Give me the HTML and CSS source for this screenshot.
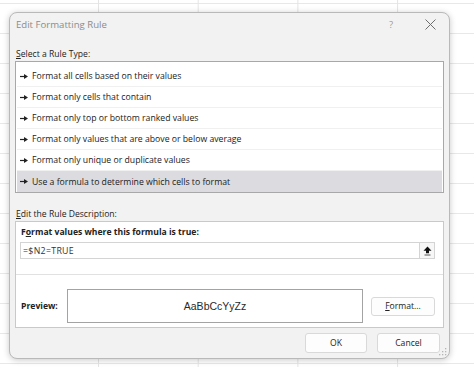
FILE: index.html
```html
<!DOCTYPE html>
<html>
<head>
<meta charset="utf-8">
<link rel="stylesheet" href="styles.css">
</head>
<body>
<div class="dialog">
  <div class="titlebar">
    <span class="title">Edit Formatting Rule</span>
    <span class="help">?</span>
    <svg class="close" width="11" height="11" viewBox="0 0 11 11"><path d="M0.5 0.5L10.5 10.5M10.5 0.5L0.5 10.5" stroke="#6e6e6e" stroke-width="1"/></svg>
  </div>
  <div class="content">
    <div class="label"><u>S</u>elect a Rule Type:</div>
    <ul class="rules">
      <li><svg class="arrow" width="8" height="5" viewBox="0 0 8 5"><path d="M0 2.5H4.5" stroke="#222" stroke-width="1.2"/><path d="M4 0L8 2.5L4 5Z" fill="#222"/></svg>Format all cells based on their values</li>
      <li><svg class="arrow" width="8" height="5" viewBox="0 0 8 5"><path d="M0 2.5H4.5" stroke="#222" stroke-width="1.2"/><path d="M4 0L8 2.5L4 5Z" fill="#222"/></svg>Format only cells that contain</li>
      <li><svg class="arrow" width="8" height="5" viewBox="0 0 8 5"><path d="M0 2.5H4.5" stroke="#222" stroke-width="1.2"/><path d="M4 0L8 2.5L4 5Z" fill="#222"/></svg>Format only top or bottom ranked values</li>
      <li><svg class="arrow" width="8" height="5" viewBox="0 0 8 5"><path d="M0 2.5H4.5" stroke="#222" stroke-width="1.2"/><path d="M4 0L8 2.5L4 5Z" fill="#222"/></svg>Format only values that are above or below average</li>
      <li><svg class="arrow" width="8" height="5" viewBox="0 0 8 5"><path d="M0 2.5H4.5" stroke="#222" stroke-width="1.2"/><path d="M4 0L8 2.5L4 5Z" fill="#222"/></svg>Format only unique or duplicate values</li>
      <li class="selected"><svg class="arrow" width="8" height="5" viewBox="0 0 8 5"><path d="M0 2.5H4.5" stroke="#222" stroke-width="1.2"/><path d="M4 0L8 2.5L4 5Z" fill="#222"/></svg>Use a formula to determine which cells to format</li>
    </ul>
    <div class="label label-desc"><u>E</u>dit the Rule Description:</div>
    <div class="desc">
      <div class="desc-top">
        <div class="bold">F<u>o</u>rmat values where this formula is true:</div>
        <div class="formula">
          <span class="formula-text">=$N2=TRUE</span>
          <span class="collapse"><svg width="9" height="10" viewBox="0 0 9 10"><path d="M4.5 0.5L8.5 4.8H6V7.2H3V4.8H0.5Z" fill="#111"/><path d="M1.5 9H7.5" stroke="#555" stroke-width="1"/></svg></span>
        </div>
      </div>
      <div class="preview-row">
        <span class="bold preview-label">Preview:</span>
        <div class="preview">AaBbCcYyZz</div>
        <span class="btn btn-format"><u>F</u>ormat...</span>
      </div>
    </div>
    <div class="actions">
      <span class="btn btn-ok">OK</span>
      <span class="btn btn-cancel">Cancel</span>
    </div>
  </div>
  <svg class="grip" width="8" height="8" viewBox="0 0 8 8"><g fill="#b5b5b5"><rect x="6" y="0" width="1.3" height="1.3"/><rect x="3" y="3" width="1.3" height="1.3"/><rect x="6" y="3" width="1.3" height="1.3"/><rect x="0" y="6" width="1.3" height="1.3"/><rect x="3" y="6" width="1.3" height="1.3"/><rect x="6" y="6" width="1.3" height="1.3"/></g></svg>
</div>
</body>
</html>
```

FILE: styles.css
```css
html, body {
  margin: 0;
  padding: 0;
}
body {
  width: 474px;
  height: 367px;
  overflow: hidden;
  background-color: #ffffff;
  background-image:
    linear-gradient(to right, #e4e4e4 1px, transparent 1px),
    linear-gradient(to bottom, #e8e8e8 1px, transparent 1px);
  background-size: 99.7px 30px, 99.7px 30px;
  background-position: 98px 0, 0 3px;
  font-family: "Open Sans", "Noto Sans", sans-serif;
  color: #222;
  padding-top: 12px;
  padding-left: 9px;
  box-sizing: border-box;
}
.dialog {
  position: relative;
  width: 441px;
  height: 347px;
  box-sizing: border-box;
  background: #f2f2f2;
  border: 1px solid #b9b9b9;
  border-radius: 8px;
  box-shadow: 0 1px 6px rgba(0,0,0,0.22);
  display: flex;
  flex-direction: column;
}
.titlebar {
  height: 23px;
  display: flex;
  align-items: center;
  padding-left: 6px;
  padding-right: 13px;
}
.title {
  flex: 1;
  font-size: 9.6px;
  color: #8c8c8c;
}
.help {
  font-size: 9.5px;
  color: #9a9a9a;
  margin-right: 32px;
}
.close {
  display: block;
}
.content {
  padding: 0 5px;
  display: flex;
  flex-direction: column;
}
.label {
  font-size: 8.6px;
  line-height: 14px;
  height: 14px;
  padding-left: 1px;
  margin-top: 11px;
  color: #222;
}
.label-desc {
  margin-top: 14px;
}
.rules {
  list-style: none;
  margin: 0;
  padding: 4px 1px 0;
  background: #fff;
  border: 1px solid #a8a8a8;
  height: 132px;
  box-sizing: border-box;
}
.rules li {
  height: 21px;
  box-sizing: border-box;
  display: flex;
  align-items: center;
  font-size: 8.7px;
  border-bottom: 1px solid #f0f0f0;
  padding-left: 3px;
  color: #1a1a1a;
}
.rules li.selected {
  background: #dcdce0;
  border-bottom: none;
}
.arrow {
  display: block;
  margin-right: 4px;
  flex: none;
}
.desc {
  background: #fff;
  border: 1px solid #c9c9c9;
  height: 107px;
  box-sizing: border-box;
  display: flex;
  flex-direction: column;
}
.desc-top {
  height: 53px;
  box-sizing: border-box;
  border-bottom: 1px solid #e1e1e1;
  padding: 3px 8px 0 4px;
}
.bold {
  font-weight: 700;
  font-size: 8.6px;
  line-height: 14px;
  padding-left: 1px;
}
.formula {
  margin-top: 3px;
  height: 17px;
  box-sizing: border-box;
  border: 1px solid #d4d4d4;
  display: flex;
  align-items: center;
  justify-content: space-between;
  padding-left: 2px;
  background: #fff;
}
.formula-text {
  font-size: 8.8px;
  letter-spacing: 0.3px;
  color: #333;
}
.collapse {
  width: 14px;
  height: 15px;
  border-left: 1px solid #d4d4d4;
  display: flex;
  align-items: center;
  justify-content: center;
  background: #f7f7f7;
}
.collapse svg {
  display: block;
}
.preview-row {
  display: flex;
  align-items: center;
  padding: 14px 0 0 4px;
}
.preview-label {
  width: 46px;
}
.preview {
  width: 296px;
  height: 34px;
  box-sizing: border-box;
  border: 1px solid #a3a3a3;
  display: flex;
  align-items: center;
  justify-content: center;
  font-family: "Liberation Sans", Arial, sans-serif;
  font-size: 10.5px;
  color: #2a2a2a;
}
.btn {
  display: flex;
  align-items: center;
  justify-content: center;
  box-sizing: border-box;
  background: #fdfdfd;
  border: 1px solid #d9d9d9;
  border-radius: 3px;
  font-size: 8.6px;
  color: #222;
}
.btn-format {
  margin-left: 8px;
  width: 64px;
  height: 19px;
}
.actions {
  display: flex;
  justify-content: flex-end;
  gap: 10px;
  margin-top: 5px;
  padding-right: 4px;
}
.btn-ok {
  width: 62px;
  height: 20px;
}
.btn-cancel {
  width: 63px;
  height: 20px;
}
.grip {
  position: absolute;
  right: 2px;
  bottom: 2px;
}
```
